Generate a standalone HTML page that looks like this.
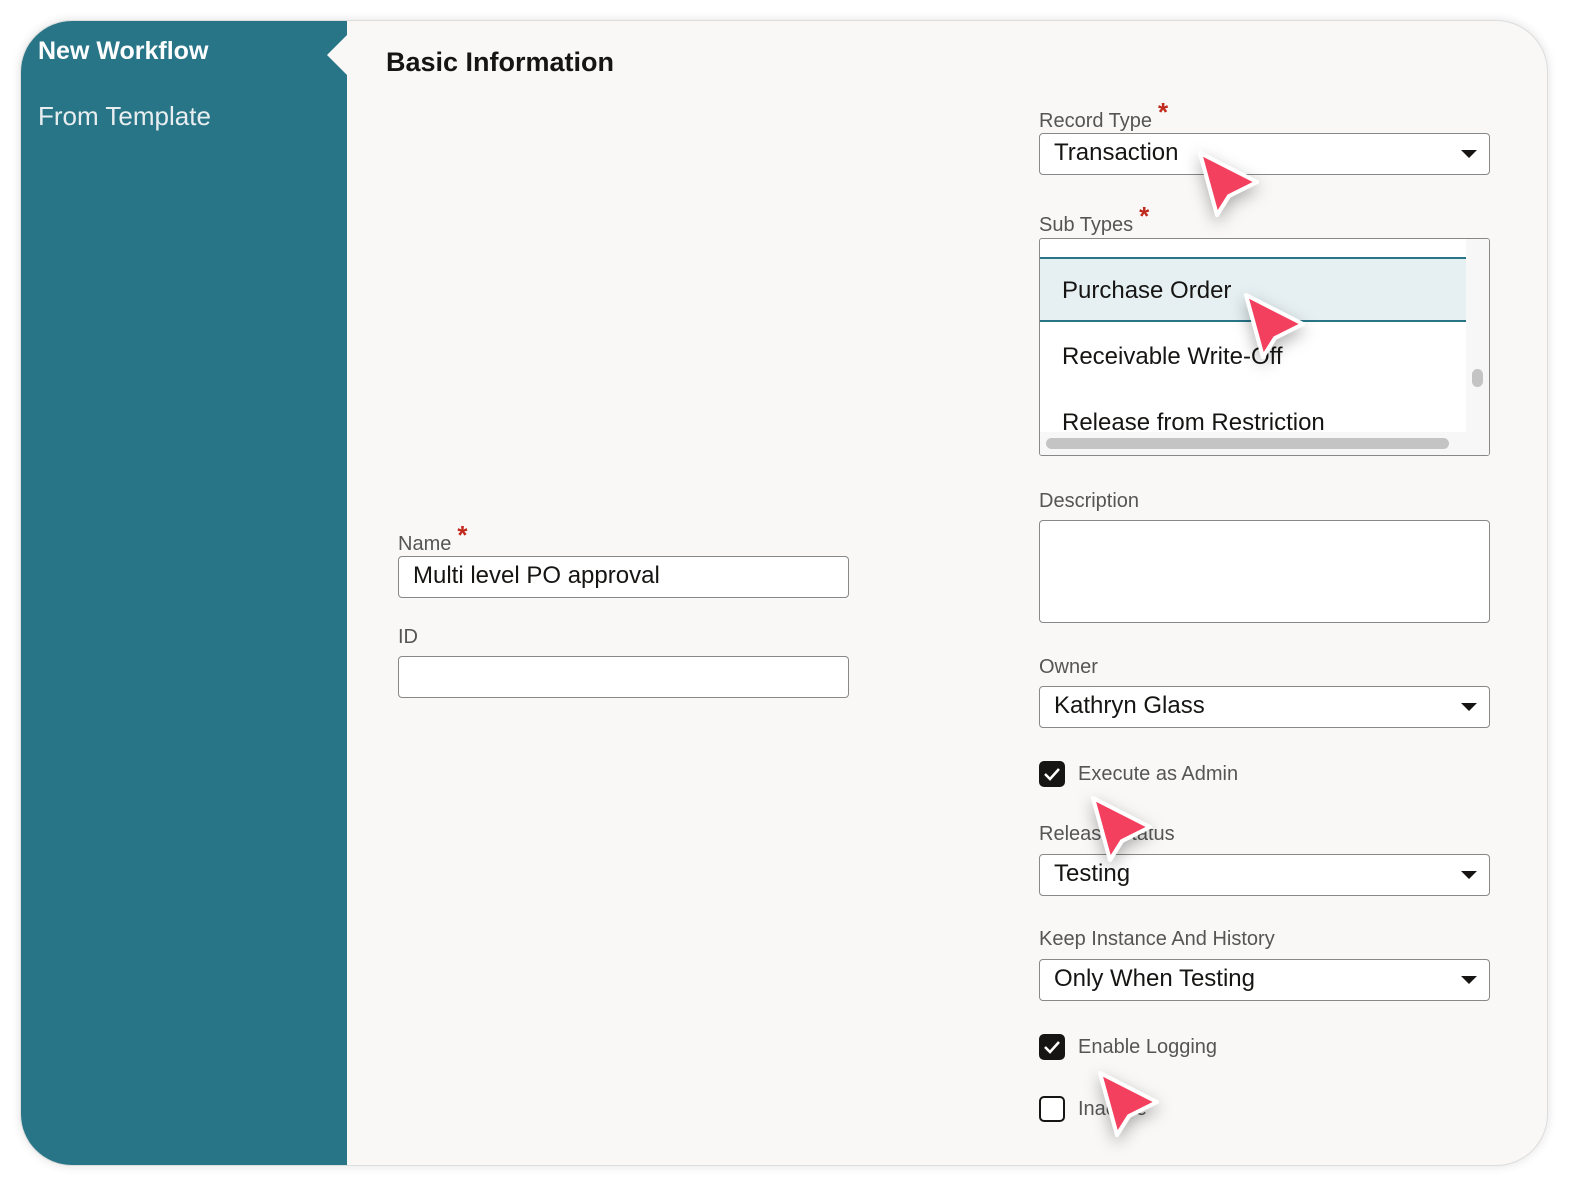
<!DOCTYPE html>
<html><head><style>
*{box-sizing:border-box;margin:0;padding:0}
body{width:1592px;height:1204px;background:#fff;font-family:"Liberation Sans",sans-serif;position:relative;overflow:hidden}
.card{position:absolute;left:20px;top:20px;width:1528px;height:1146px;border-radius:52px;overflow:hidden;background:#f9f8f7;box-shadow:0 0 10px rgba(0,0,0,.12);border:1px solid #ddd}
.side{position:absolute;left:0;top:0;width:326px;height:100%;background:#287587}
.side .a{position:absolute;left:17px;top:16px;color:#fff;font-weight:bold;font-size:25px}
.side .b{position:absolute;left:17px;top:80px;color:#e8eef0;font-size:26px}
.notch{position:absolute;left:306px;top:14px;width:0;height:0;border-top:20px solid transparent;border-bottom:20px solid transparent;border-right:20px solid #f9f8f7}
h1{position:absolute;left:365px;top:26px;font-size:27px;font-weight:bold;color:#161513}
.lbl{position:absolute;font-size:20px;color:#555;}
.lbl i{color:#c0291d;font-style:normal;font-weight:bold;font-size:26px;position:relative;top:-6px;margin-left:6px}
.inp{position:absolute;background:#fff;border:1.5px solid #888;border-radius:4px;font-size:24px;color:#161513;padding-left:14px;line-height:38px}
.dd::after{content:"";position:absolute;right:12px;top:16px;border-left:8px solid transparent;border-right:8px solid transparent;border-top:8px solid #161513}
.cb{position:absolute;width:26px;height:26px;border-radius:5px;background:#161513}
.cb.off{background:#fff;border:2px solid #161513}
.cb svg{position:absolute;left:4px;top:5px}
.cbl{position:absolute;font-size:20px;color:#555}
.li{position:absolute;left:22px;font-size:24px;color:#161513}
</style></head><body>
<div class="card">
 <div class="side"><div class="a">New Workflow</div><div class="b">From Template</div><div class="notch"></div></div>
 <h1>Basic Information</h1>
 <div class="lbl" style="left:1018px;top:82px">Record Type<i>*</i></div>
 <div class="inp dd" style="left:1018px;top:112px;width:451px;height:42px">Transaction</div>
 <div class="lbl" style="left:1018px;top:186px">Sub Types<i>*</i></div>
 <div style="position:absolute;left:1018px;top:217px;width:451px;height:218px;background:#fff;border:1.5px solid #888;border-radius:3px;overflow:hidden">
  <div style="position:absolute;left:0;top:18px;width:426px;height:65px;background:#e6f0f2;border-top:2px solid #287587;border-bottom:2px solid #287587"></div>
  <div class="li" style="top:38px">Purchase Order</div>
  <div class="li" style="top:104px">Receivable Write-Off</div>
  <div class="li" style="top:170px">Release from Restriction</div>
  <div style="position:absolute;left:0;top:193px;width:451px;height:25px;background:#f7f7f7"></div>
  <div style="position:absolute;left:426px;top:0;width:25px;height:218px;background:#f7f7f7"></div>
  <div style="position:absolute;left:6px;top:199px;width:403px;height:11px;border-radius:6px;background:#c4c4c4"></div>
  <div style="position:absolute;left:432px;top:130px;width:11px;height:18px;border-radius:6px;background:#c4c4c4"></div>
 </div>
 <div class="lbl" style="left:1018px;top:469px">Description</div>
 <div class="inp" style="left:1018px;top:499px;width:451px;height:103px"></div>
 <div class="lbl" style="left:377px;top:505px">Name<i>*</i></div>
 <div class="inp" style="left:377px;top:535px;width:451px;height:42px">Multi level PO approval</div>
 <div class="lbl" style="left:377px;top:605px">ID</div>
 <div class="inp" style="left:377px;top:635px;width:451px;height:42px"></div>
 <div class="lbl" style="left:1018px;top:635px">Owner</div>
 <div class="inp dd" style="left:1018px;top:665px;width:451px;height:42px">Kathryn Glass</div>
 <div class="cb" style="left:1018px;top:740px"><svg width="18" height="16"><path d="M2 8 L7 13 L16 3" stroke="#fff" stroke-width="2.5" fill="none"/></svg></div>
 <div class="cbl" style="left:1057px;top:742px">Execute as Admin</div>
 <div class="lbl" style="left:1018px;top:802px">Release Status</div>
 <div class="inp dd" style="left:1018px;top:833px;width:451px;height:42px">Testing</div>
 <div class="lbl" style="left:1018px;top:907px">Keep Instance And History</div>
 <div class="inp dd" style="left:1018px;top:938px;width:451px;height:42px">Only When Testing</div>
 <div class="cb" style="left:1018px;top:1013px"><svg width="18" height="16"><path d="M2 8 L7 13 L16 3" stroke="#fff" stroke-width="2.5" fill="none"/></svg></div>
 <div class="cbl" style="left:1057px;top:1015px">Enable Logging</div>
 <div class="cb off" style="left:1018px;top:1075px"></div>
 <div class="cbl" style="left:1057px;top:1077px">Inactive</div>
</div>
<svg width="1592" height="1204" style="position:absolute;left:0;top:0">
<defs><filter id="s" x="-50%" y="-50%" width="200%" height="200%"><feDropShadow dx="0" dy="6" stdDeviation="8" flood-opacity=".3"/></filter>
<path id="c" d="M0 0 L57 29 L29 43 L17 62 Z" fill="#f4405f" stroke="#fff" stroke-width="4" stroke-linejoin="round"/></defs>
<use href="#c" x="1200" y="153" filter="url(#s)"/>
<use href="#c" x="1246" y="295" filter="url(#s)"/>
<use href="#c" x="1093" y="798" filter="url(#s)"/>
<use href="#c" x="1100" y="1073" filter="url(#s)"/>
</svg>
</body></html>
